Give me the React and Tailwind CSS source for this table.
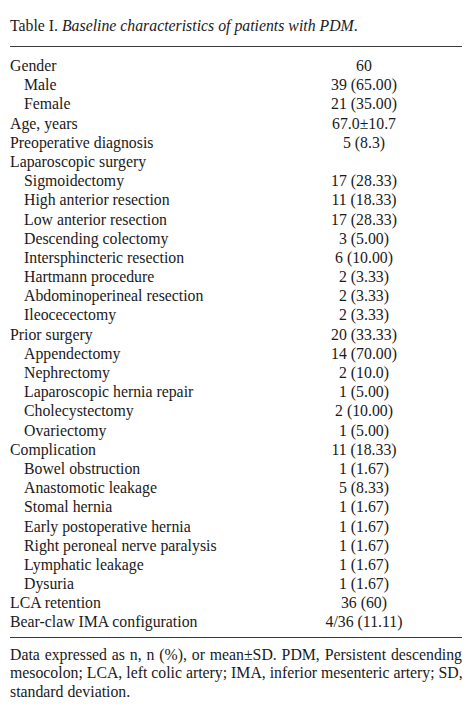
const rows = [
    { label: "Gender", value: "60" },
    { label: "Male", value: "39 (65.00)", sub: true },
    { label: "Female", value: "21 (35.00)", sub: true },
    { label: "Age, years", value: "67.0±10.7" },
    { label: "Preoperative diagnosis", value: "5 (8.3)" },
    { label: "Laparoscopic surgery", value: "" },
    { label: "Sigmoidectomy", value: "17 (28.33)", sub: true },
    { label: "High anterior resection", value: "11 (18.33)", sub: true },
    { label: "Low anterior resection", value: "17 (28.33)", sub: true },
    { label: "Descending colectomy", value: "3 (5.00)", sub: true },
    { label: "Intersphincteric resection", value: "6 (10.00)", sub: true },
    { label: "Hartmann procedure", value: "2 (3.33)", sub: true },
    { label: "Abdominoperineal resection", value: "2 (3.33)", sub: true },
    { label: "Ileocecectomy", value: "2 (3.33)", sub: true },
    { label: "Prior surgery", value: "20 (33.33)" },
    { label: "Appendectomy", value: "14 (70.00)", sub: true },
    { label: "Nephrectomy", value: "2 (10.0)", sub: true },
    { label: "Laparoscopic hernia repair", value: "1 (5.00)", sub: true },
    { label: "Cholecystectomy", value: "2 (10.00)", sub: true },
    { label: "Ovariectomy", value: "1 (5.00)", sub: true },
    { label: "Complication", value: "11 (18.33)" },
    { label: "Bowel obstruction", value: "1 (1.67)", sub: true },
    { label: "Anastomotic leakage", value: "5 (8.33)", sub: true },
    { label: "Stomal hernia", value: "1 (1.67)", sub: true },
    { label: "Early postoperative hernia", value: "1 (1.67)", sub: true },
    { label: "Right peroneal nerve paralysis", value: "1 (1.67)", sub: true },
    { label: "Lymphatic leakage", value: "1 (1.67)", sub: true },
    { label: "Dysuria", value: "1 (1.67)", sub: true },
    { label: "LCA retention", value: "36 (60)" },
    { label: "Bear-claw IMA configuration", value: "4/36 (11.11)" },
];

export default function App() {
    return (
        <div className="min-h-[719px] w-[474px] bg-white pl-[10px] pr-[12px] pt-[16px] font-['Liberation_Serif',serif] text-[15.8px] text-[#1a1a1a]">
            <p className="leading-[19px]">
                Table I. <i>Baseline characteristics of patients with PDM</i>.
            </p>

            <div className="mt-[11px] border-t border-[#3a3a3a]" />

            {/* table body */}
            <div className="py-[7px]">
                {rows.map((r) => (
                    <div key={r.label} className="grid h-[19.2px] grid-cols-[256px_196px] items-center">
                        <span className={r.sub ? "pl-[14px]" : ""}>{r.label}</span>
                        <span className="text-center">{r.value}</span>
                    </div>
                ))}
            </div>

            <div className="border-t border-[#3a3a3a]" />

            {/* footnote, broken as in the print */}
            <div className="mt-[8px] leading-[18.5px]">
                <p className="whitespace-nowrap text-justify [text-align-last:justify]">
                    Data expressed as n, n (%), or mean±SD. PDM, Persistent descending
                </p>
                <p className="whitespace-nowrap text-justify [text-align-last:justify]">
                    mesocolon; LCA, left colic artery; IMA, inferior mesenteric artery; SD,
                </p>
                <p>standard deviation.</p>
            </div>
        </div>
    );
}
